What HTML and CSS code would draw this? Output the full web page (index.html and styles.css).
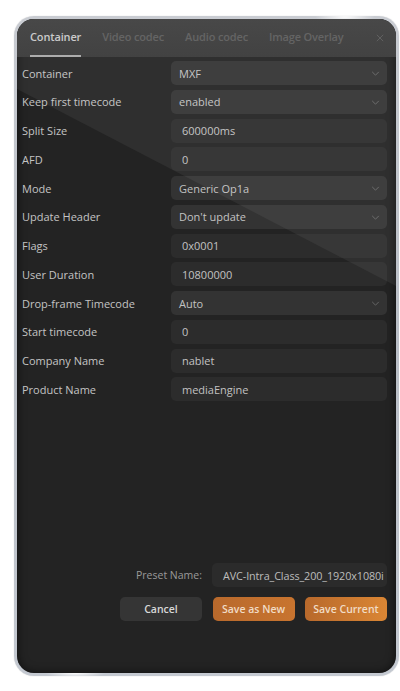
FILE: index.html
```html
<!DOCTYPE html>
<html lang="en">
<head>
<meta charset="utf-8">
<title>Preset editor</title>
<link rel="stylesheet" href="styles.css">
</head>
<body>
<div class="frame">
  <div class="panel">
    <div class="tabs">
      <span class="tab active">Container</span>
      <span class="tab">Video codec</span>
      <span class="tab">Audio codec</span>
      <span class="tab">Image Overlay</span>
      <svg class="close" viewBox="0 0 10 10"><path d="M1 1 L9 9 M9 1 L1 9"/></svg>
    </div>
    <div class="form">
      <div class="row"><span class="label">Container</span><div class="field select">MXF<svg class="chev" viewBox="0 0 10 6"><path d="M1 1 L5 5 L9 1"/></svg></div></div>
      <div class="row"><span class="label">Keep first timecode</span><div class="field select">enabled<svg class="chev" viewBox="0 0 10 6"><path d="M1 1 L5 5 L9 1"/></svg></div></div>
      <div class="row"><span class="label">Split Size</span><div class="field input">600000ms</div></div>
      <div class="row"><span class="label">AFD</span><div class="field input">0</div></div>
      <div class="row"><span class="label">Mode</span><div class="field select">Generic Op1a<svg class="chev" viewBox="0 0 10 6"><path d="M1 1 L5 5 L9 1"/></svg></div></div>
      <div class="row"><span class="label">Update Header</span><div class="field select">Don't update<svg class="chev" viewBox="0 0 10 6"><path d="M1 1 L5 5 L9 1"/></svg></div></div>
      <div class="row"><span class="label">Flags</span><div class="field input">0x0001</div></div>
      <div class="row"><span class="label">User Duration</span><div class="field input">10800000</div></div>
      <div class="row"><span class="label">Drop-frame Timecode</span><div class="field select">Auto<svg class="chev" viewBox="0 0 10 6"><path d="M1 1 L5 5 L9 1"/></svg></div></div>
      <div class="row"><span class="label">Start timecode</span><div class="field input">0</div></div>
      <div class="row"><span class="label">Company Name</span><div class="field input">nablet</div></div>
      <div class="row"><span class="label">Product Name</span><div class="field input">mediaEngine</div></div>
    </div>
    <div class="footer">
      <div class="preset">
        <span class="preset-label">Preset Name:</span>
        <div class="preset-field">AVC-Intra_Class_200_1920x1080i</div>
      </div>
      <div class="buttons">
        <button class="btn cancel">Cancel</button>
        <button class="btn primary">Save as New</button>
        <button class="btn primary">Save Current</button>
      </div>
    </div>
  </div>
</div>
</body>
</html>
```
FILE: styles.css
```css
html, body {
  margin: 0;
  padding: 0;
  background: #ffffff;
}
body {
  font-family: "Open Sans", "Noto Sans", "Liberation Sans", sans-serif;
  width: 400px;
  height: 691px;
  overflow: hidden;
}
.frame {
  box-sizing: border-box;
  width: 385px;
  height: 660px;
  margin: 16px 0 0 14px;
  padding: 3px;
  border-radius: 20px;
  background:
    radial-gradient(ellipse 30px 5px at 331px 1px, rgba(255,255,255,0.95), rgba(255,255,255,0) 100%),
    radial-gradient(ellipse 30px 5px at 61px 657px, rgba(255,255,255,0.95), rgba(255,255,255,0) 100%),
    linear-gradient(180deg, #c9ccd2 0%, #b9bec6 50%, #c4c9d1 100%);
  box-shadow: 0 0 1px rgba(0,0,0,0.25);
}
.panel {
  position: relative;
  height: 100%;
  border-radius: 17px;
  background: #232323;
  overflow: hidden;
  display: flex;
  flex-direction: column;
  box-shadow: inset 0 0 10px rgba(0,0,0,0.6);
}
.panel::after {
  content: "";
  position: absolute;
  inset: 0;
  background: rgba(255,255,255,0.055);
  clip-path: polygon(0 70px, 100% 267px, 100% 0, 0 0);
  pointer-events: none;
}
.tabs {
  height: 38px;
  flex: none;
  display: flex;
  align-items: stretch;
  padding-left: 13px;
  background: linear-gradient(180deg, #3e3e3e, #383838);
  position: relative;
}
.tab {
  display: flex;
  align-items: center;
  box-sizing: border-box;
  margin-right: 21px;
  font-size: 11px;
  font-weight: 600;
  letter-spacing: -0.15px;
  color: #5c5c5c;
  border-bottom: 2px solid transparent;
  padding-bottom: 1px;
}
.tab.active {
  color: #c8c8c8;
  border-bottom-color: #a9a9a9;
}
.close {
  position: absolute;
  right: 12px;
  top: 15px;
  width: 8px;
  height: 8px;
  fill: none;
  stroke: #595959;
  stroke-width: 1.2;
}
.form {
  padding: 4px 9px 0 5px;
  display: flex;
  flex-direction: column;
  gap: 4.75px;
}
.row {
  display: grid;
  grid-template-columns: 149px 1fr;
  align-items: center;
  height: 24px;
}
.label {
  font-size: 11px;
  font-weight: 500;
  color: #c4c4c4;
  white-space: nowrap;
}
.field {
  height: 24px;
  box-sizing: border-box;
  border-radius: 5px;
  background: #2e2e2e;
  display: flex;
  align-items: center;
  font-size: 11px;
  font-weight: 500;
  color: #c2c2c2;
  position: relative;
}
.field.select {
  padding-left: 8px;
  background: #333333;
}
.field.input {
  padding-left: 11px;
  background: #2c2c2c;
}
.chev {
  position: absolute;
  right: 7px;
  top: 10px;
  width: 9px;
  height: 5px;
  fill: none;
  stroke: #6a6a6a;
  stroke-width: 1.1;
}
.footer {
  margin-top: auto;
  padding: 0 9px 52px 0;
  display: flex;
  flex-direction: column;
  align-items: flex-end;
  gap: 10px;
}
.preset {
  display: flex;
  align-items: center;
  gap: 10px;
}
.preset-label {
  font-size: 10.5px;
  color: #9a9a9a;
}
.preset-field {
  width: 175px;
  height: 24px;
  box-sizing: border-box;
  padding-left: 11px;
  border-radius: 5px;
  background: #2b2b2b;
  display: flex;
  align-items: center;
  font-size: 10.8px;
  letter-spacing: -0.1px;
  color: #bdbdbd;
  white-space: nowrap;
  overflow: hidden;
}
.buttons {
  display: flex;
  gap: 10.5px;
}
.btn {
  width: 82px;
  height: 24px;
  border: none;
  border-radius: 5px;
  font-family: inherit;
  font-size: 10.5px;
  font-weight: 600;
  padding: 0;
}
.cancel {
  background: #353535;
  color: #d8d8d8;
}
.primary {
  background: linear-gradient(90deg, #b8692c, #c8742f);
  color: #f1dcc6;
}
.buttons .primary:last-child {
  background: linear-gradient(90deg, #b8692c, #da8634);
}
```
